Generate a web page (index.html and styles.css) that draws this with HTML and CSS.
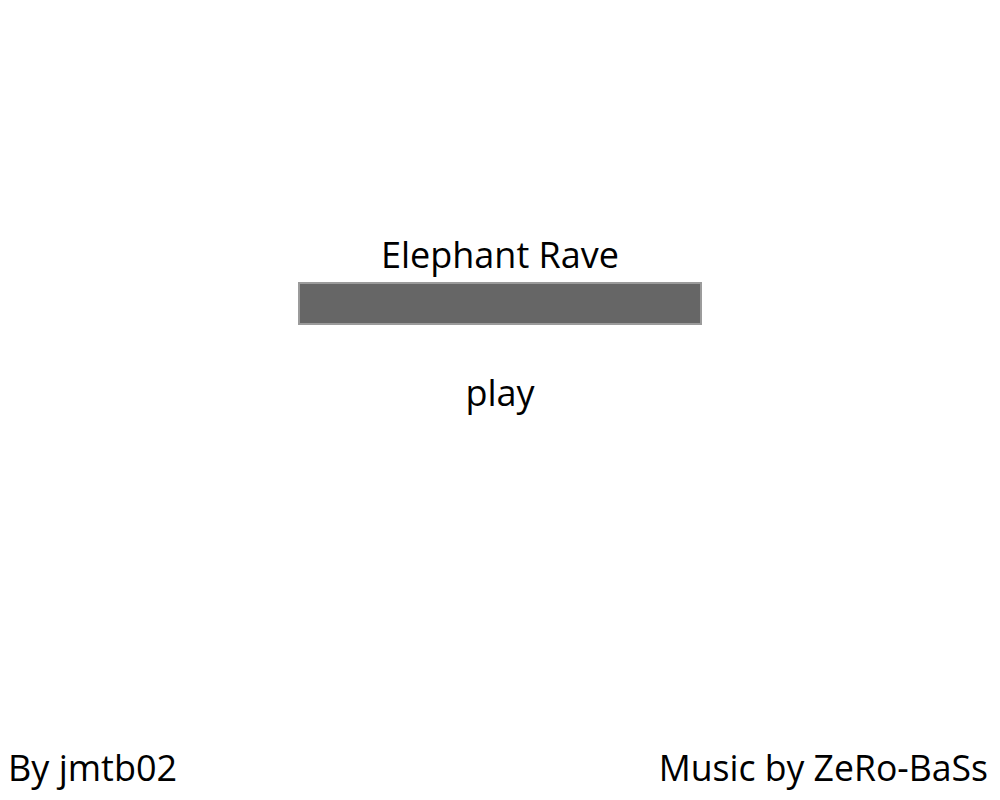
FILE: index.html
```html
<!DOCTYPE html>
<html>
<head>
<meta charset="utf-8">
<link rel="stylesheet" href="styles.css">
</head>
<body>
<div class="screen">
  <div class="center">
    <div class="title">Elephant Rave</div>
    <div class="bar"></div>
    <div class="play">play</div>
  </div>
  <div class="footer">
    <div class="credit">By jmtb02</div>
    <div class="credit">Music by ZeRo-BaSs</div>
  </div>
</div>
</body>
</html>
```
FILE: styles.css
```css
html, body {
  margin: 0;
  padding: 0;
  background: #ffffff;
}
.screen {
  width: 1000px;
  height: 800px;
  display: flex;
  flex-direction: column;
  font-family: "Open Sans", "Noto Sans", sans-serif;
  color: #000;
}
.center {
  display: flex;
  flex-direction: column;
  align-items: center;
  padding-top: 233px;
  flex: 1;
}
.title {
  font-size: 36px;
  line-height: 44px;
}
.bar {
  margin-top: 5px;
  width: 400px;
  height: 39px;
  background: #666666;
  border: 2px solid #9b9b9b;
}
.play {
  margin-top: 46px;
  font-size: 36px;
  line-height: 44px;
}
.footer {
  display: flex;
  justify-content: space-between;
  align-items: baseline;
  padding: 0 12px 10px 8px;
}
.credit {
  font-size: 36px;
  line-height: 44px;
}
.credit + .credit {
  font-size: 35.6px;
}
```
